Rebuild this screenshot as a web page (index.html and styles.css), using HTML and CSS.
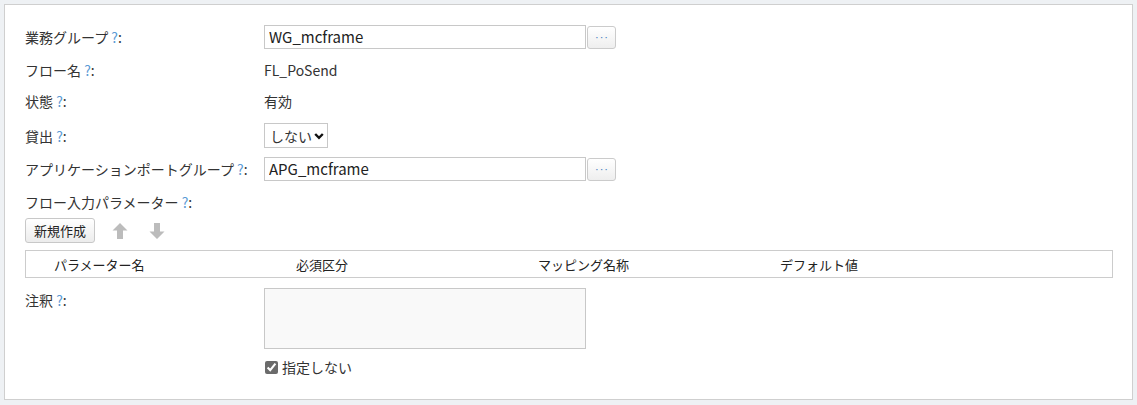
FILE: index.html
```html
<!DOCTYPE html>
<html lang="ja">
<head>
  <meta charset="UTF-8">
  <title>フロー設定</title>
  <link rel="stylesheet" href="styles.css">
</head>
<body>
  <div class="panel">
    <div class="row">
      <label class="label">業務グループ <span class="help">?</span>:</label>
      <div class="value">
        <input class="text" type="text" value="WG_mcframe">
        <button class="pick" type="button">···</button>
      </div>
    </div>
    <div class="row row-name">
      <span class="label">フロー名 <span class="help">?</span>:</span>
      <div class="value">FL_PoSend</div>
    </div>
    <div class="row row-state">
      <span class="label">状態 <span class="help">?</span>:</span>
      <div class="value">有効</div>
    </div>
    <div class="row row-select">
      <label class="label">貸出 <span class="help">?</span>:</label>
      <div class="value">
        <span class="select-wrap">
          <select class="select">
            <option>しない</option>
            <option>する</option>
          </select>
          <svg class="chevron" width="10" height="8" viewBox="0 0 10 8"><path d="M1.2 2 L5 5.8 L8.8 2" fill="none" stroke="#111" stroke-width="2.4"/></svg>
        </span>
      </div>
    </div>
    <div class="row">
      <label class="label">アプリケーションポートグループ <span class="help">?</span>:</label>
      <div class="value">
        <input class="text" type="text" value="APG_mcframe">
        <button class="pick" type="button">···</button>
      </div>
    </div>
    <div class="row">
      <span class="label">フロー入力パラメーター <span class="help">?</span>:</span>
    </div>
    <div class="toolbar">
      <button class="btn" type="button">新規作成</button>
      <svg class="arrow" width="16" height="18" viewBox="0 0 16 18"><path d="M8 1 L15.5 8.5 L11 8.5 L11 17 L5 17 L5 8.5 L0.5 8.5 Z" fill="#bcbcbc"/></svg>
      <svg class="arrow" width="16" height="18" viewBox="0 0 16 18"><path d="M8 17 L15.5 9.5 L11 9.5 L11 1 L5 1 L5 9.5 L0.5 9.5 Z" fill="#bcbcbc"/></svg>
    </div>
    <div class="params">
      <span>パラメーター名</span>
      <span>必須区分</span>
      <span>マッピング名称</span>
      <span>デフォルト値</span>
    </div>
    <div class="row row-note">
      <label class="label">注釈 <span class="help">?</span>:</label>
      <div class="value">
        <textarea class="note"></textarea>
      </div>
    </div>
    <div class="row row-check">
      <span class="label"></span>
      <label class="value check">
        <input type="checkbox" checked>
        <span>指定しない</span>
      </label>
    </div>
  </div>
</body>
</html>
```

FILE: styles.css
```css
* {
  box-sizing: border-box;
}
html,
body {
  margin: 0;
  background: #eef1f4;
}
body {
  padding: 4px 4px 5px;
  font-family: "Noto Sans CJK JP", "Noto Sans", sans-serif;
  font-size: 14px;
  color: #333;
}
.panel {
  background: #fff;
  border: 1px solid #cfcfcf;
  padding: 20px 20px 19px;
  height: 396px;
}
.row {
  display: flex;
  align-items: center;
  min-height: 24px;
  margin-bottom: 9px;
}
.row-name {
  margin-bottom: 7px;
}
.row-state {
  margin-bottom: 10px;
}
.row-select {
  min-height: 25px;
}
.label {
  width: 239px;
  flex: none;
  line-height: 24px;
}
.help {
  color: #5b9bd5;
}
.value {
  display: flex;
  align-items: center;
  line-height: 24px;
}
.text {
  width: 322px;
  height: 24px;
  border: 1px solid #c8c8c8;
  padding: 0 4px;
  font: inherit;
  font-size: 15px;
  color: #222;
  outline: none;
}
.pick {
  width: 29px;
  height: 23px;
  margin-left: 1px;
  border: 1px solid #cbcbcb;
  border-radius: 3px;
  background: linear-gradient(#fff, #eeeeee);
  color: #3b7bc0;
  font-size: 11px;
  letter-spacing: 1px;
  padding: 0 0 0 1px;
  cursor: pointer;
}
.select-wrap {
  position: relative;
  display: inline-block;
}
.select {
  appearance: none;
  -webkit-appearance: none;
  width: 64px;
  height: 25px;
  border: 1px solid #c8c8c8;
  border-radius: 0;
  background: #fff;
  padding: 0 0 0 5px;
  font: inherit;
  color: #333;
  outline: none;
}
.chevron {
  position: absolute;
  right: 4px;
  top: 9px;
  pointer-events: none;
}
.toolbar {
  display: flex;
  align-items: center;
  gap: 21px;
  margin-top: -5px;
  margin-bottom: 7px;
}
.btn {
  height: 25px;
  padding: 0 8px;
  border: 1px solid #c8c8c8;
  border-radius: 3px;
  background: linear-gradient(#fff, #ececec);
  font: inherit;
  font-size: 13px;
  color: #222;
  cursor: pointer;
}
.toolbar .arrow:first-of-type {
  margin-left: -4px;
}
.params {
  display: grid;
  grid-template-columns: 242px 242px 242px 1fr;
  align-items: center;
  height: 28px;
  width: 1088px;
  border: 1px solid #cccccc;
  padding-left: 28px;
  font-size: 13px;
  color: #222;
  margin-bottom: 10px;
}
.row-note {
  align-items: flex-start;
  margin-bottom: 6px;
}
.note {
  display: block;
  width: 322px;
  height: 61px;
  border: 1px solid #c8c8c8;
  background: #f9f9f9;
  resize: none;
  outline: none;
}
.check {
  gap: 4px;
  margin-left: 1px;
}
.check input {
  margin: 0;
  width: 13px;
  height: 13px;
  accent-color: #6b6b6b;
}
```
